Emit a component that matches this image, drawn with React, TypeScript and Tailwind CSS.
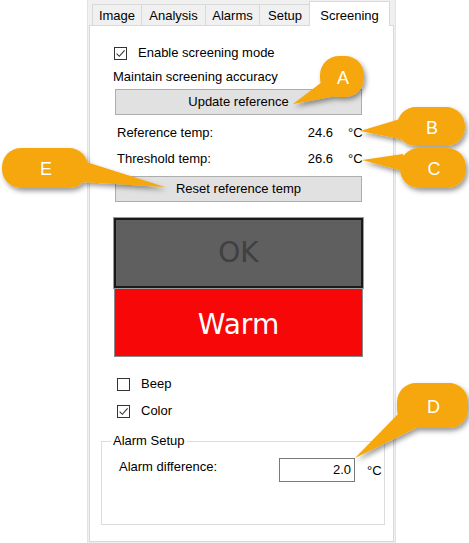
import React from "react";

type CalloutSpec = {
  label: string;
  x: number;
  y: number;
  w: number;
  h: number;
  tail: [number, number][];
};

const CALLOUTS: CalloutSpec[] = [
  { label: "A", x: 320, y: 56, w: 44, h: 41, tail: [[322, 82], [336, 96], [293, 104]] },
  { label: "B", x: 397, y: 107, w: 68, h: 39, tail: [[400, 119], [410, 141], [360, 131]] },
  { label: "C", x: 400, y: 148, w: 66, h: 40, tail: [[403, 154], [410, 173], [362, 160]] },
  { label: "D", x: 397, y: 383, w: 71, h: 45, tail: [[400, 412], [416, 428], [355, 458]] },
  { label: "E", x: 2, y: 148, w: 86, h: 40, tail: [[80, 160], [82, 182], [165, 187]] },
];

function Callouts() {
  return (
    <svg className="pointer-events-none absolute left-0 top-0" width="469" height="543" viewBox="0 0 469 543">
      <defs>
        <filter id="sh" x="-30%" y="-30%" width="160%" height="160%">
          <feDropShadow dx="2" dy="3" stdDeviation="2.5" floodColor="#000" floodOpacity="0.4" />
        </filter>
      </defs>
      {CALLOUTS.map((c) => (
        <g key={c.label}>
          <g filter="url(#sh)" fill="#f5a70b">
            <rect x={c.x} y={c.y} width={c.w} height={c.h} rx={19} ry={19} />
            <polygon points={c.tail.map((p) => p.join(",")).join(" ")} />
          </g>
          <text
            x={c.x + c.w / 2 + 1}
            y={c.y + c.h / 2 + 1}
            textAnchor="middle"
            dominantBaseline="central"
            fill="#fff"
            fontSize="18"
            fontFamily="'Liberation Sans', Arial, sans-serif"
          >
            {c.label}
          </text>
        </g>
      ))}
    </svg>
  );
}

function Check({ checked }: { checked?: boolean }) {
  return (
    <span className="flex h-[13px] w-[13px] shrink-0 items-center justify-center border border-[#333] bg-white">
      {checked && (
        <svg width="11" height="11" viewBox="0 0 11 11">
          <path d="M1.6 5.6 L4.3 8.3 L9.6 2.4" fill="none" stroke="#333" strokeWidth="1.1" />
        </svg>
      )}
    </span>
  );
}

const tabs = [
  { name: "Image", w: "w-[50px]" },
  { name: "Analysis", w: "w-[65px]" },
  { name: "Alarms", w: "w-[55px]" },
  { name: "Setup", w: "w-[52px]" },
];

export default function App() {
  return (
    <div className="relative h-[543px] w-[469px] overflow-hidden bg-white font-['Liberation_Sans',Arial,sans-serif] text-[13px] text-black">
      <div className="ml-[87px] flex h-full w-[309px] flex-col border-x border-[#e3e3e3] bg-[#f0f0f0]">
        {/* tab strip */}
        <div className="flex h-[25px] items-end pl-[4px]">
          {tabs.map((t, i) => (
            <div
              key={t.name}
              className={`${t.w} ${i > 0 ? "-ml-px" : ""} flex h-[21px] items-center justify-center border border-b-0 border-[#d9d9d9] bg-[#f0f0f0] pt-px`}
            >
              {t.name}
            </div>
          ))}
          <div className="relative z-10 -mb-px -ml-[2px] flex h-[25px] w-[81px] items-start justify-center border border-b-0 border-[#d9d9d9] bg-white pt-[4px]">
            Screening
          </div>
        </div>

        {/* panel */}
        <div className="ml-px h-[517px] w-[305px] border border-[#d9d9d9] bg-white">
          <div className="mt-[19px] flex h-[16px] items-center pl-[24px]">
            <Check checked />
            <span className="ml-[11px]">Enable screening mode</span>
          </div>
          <div className="mt-[8px] flex h-[16px] items-center pl-[23px]">Maintain screening accuracy</div>
          <button className="ml-[25px] mt-[4px] h-[26px] w-[247px] border border-[#adadad] bg-[#e1e1e1]">
            Update reference
          </button>

          <div className="mt-[10px] flex h-[16px] items-center pl-[27px]">
            <div className="flex w-[216px] justify-between">
              <span>Reference temp:</span>
              <span>24.6</span>
            </div>
            <span className="ml-[15px]">°C</span>
          </div>
          <div className="mt-[10px] flex h-[16px] items-center pl-[27px]">
            <div className="flex w-[216px] justify-between">
              <span>Threshold temp:</span>
              <span>26.6</span>
            </div>
            <span className="ml-[15px]">°C</span>
          </div>
          <button className="ml-[25px] mt-[9px] h-[26px] w-[247px] border border-[#adadad] bg-[#e1e1e1]">
            Reset reference temp
          </button>

          {/* status boxes */}
          <div className="ml-[24px] mt-[16px] w-[249px] font-['DejaVu_Sans',Verdana,sans-serif] text-[28px]">
            <div className="flex h-[70px] items-center justify-center border-2 border-[#1a1a1a] bg-[#5f5f5f] text-[#404040] outline outline-1 outline-[#9a9a9a]">
              OK
            </div>
            <div className="flex h-[69px] items-center justify-center border border-[#8a8a8a] bg-[#f70707] pt-[4px] text-white">
              Warm
            </div>
          </div>

          <div className="mt-[19px] flex h-[16px] items-center pl-[27px]">
            <Check />
            <span className="ml-[11px]">Beep</span>
          </div>
          <div className="mt-[11px] flex h-[16px] items-center pl-[27px]">
            <Check checked />
            <span className="ml-[11px]">Color</span>
          </div>

          {/* alarm setup group */}
          <fieldset className="ml-[11px] mt-[14px] h-[92px] w-[284px] border border-[#dcdcdc]">
            <legend className="ml-[9px] px-[2px] leading-[16px]">Alarm Setup</legend>
            <div className="mt-[9px] flex items-start pl-[17px]">
              <span className="mt-px w-[160px] leading-[16px]">Alarm difference:</span>
              <div className="flex h-[24px] w-[76px] items-center justify-end border border-[#7a7a7a] pr-[3px]">2.0</div>
              <span className="ml-[12px] mt-[5px] leading-[16px]">°C</span>
            </div>
          </fieldset>
        </div>
      </div>

      <Callouts />
    </div>
  );
}
